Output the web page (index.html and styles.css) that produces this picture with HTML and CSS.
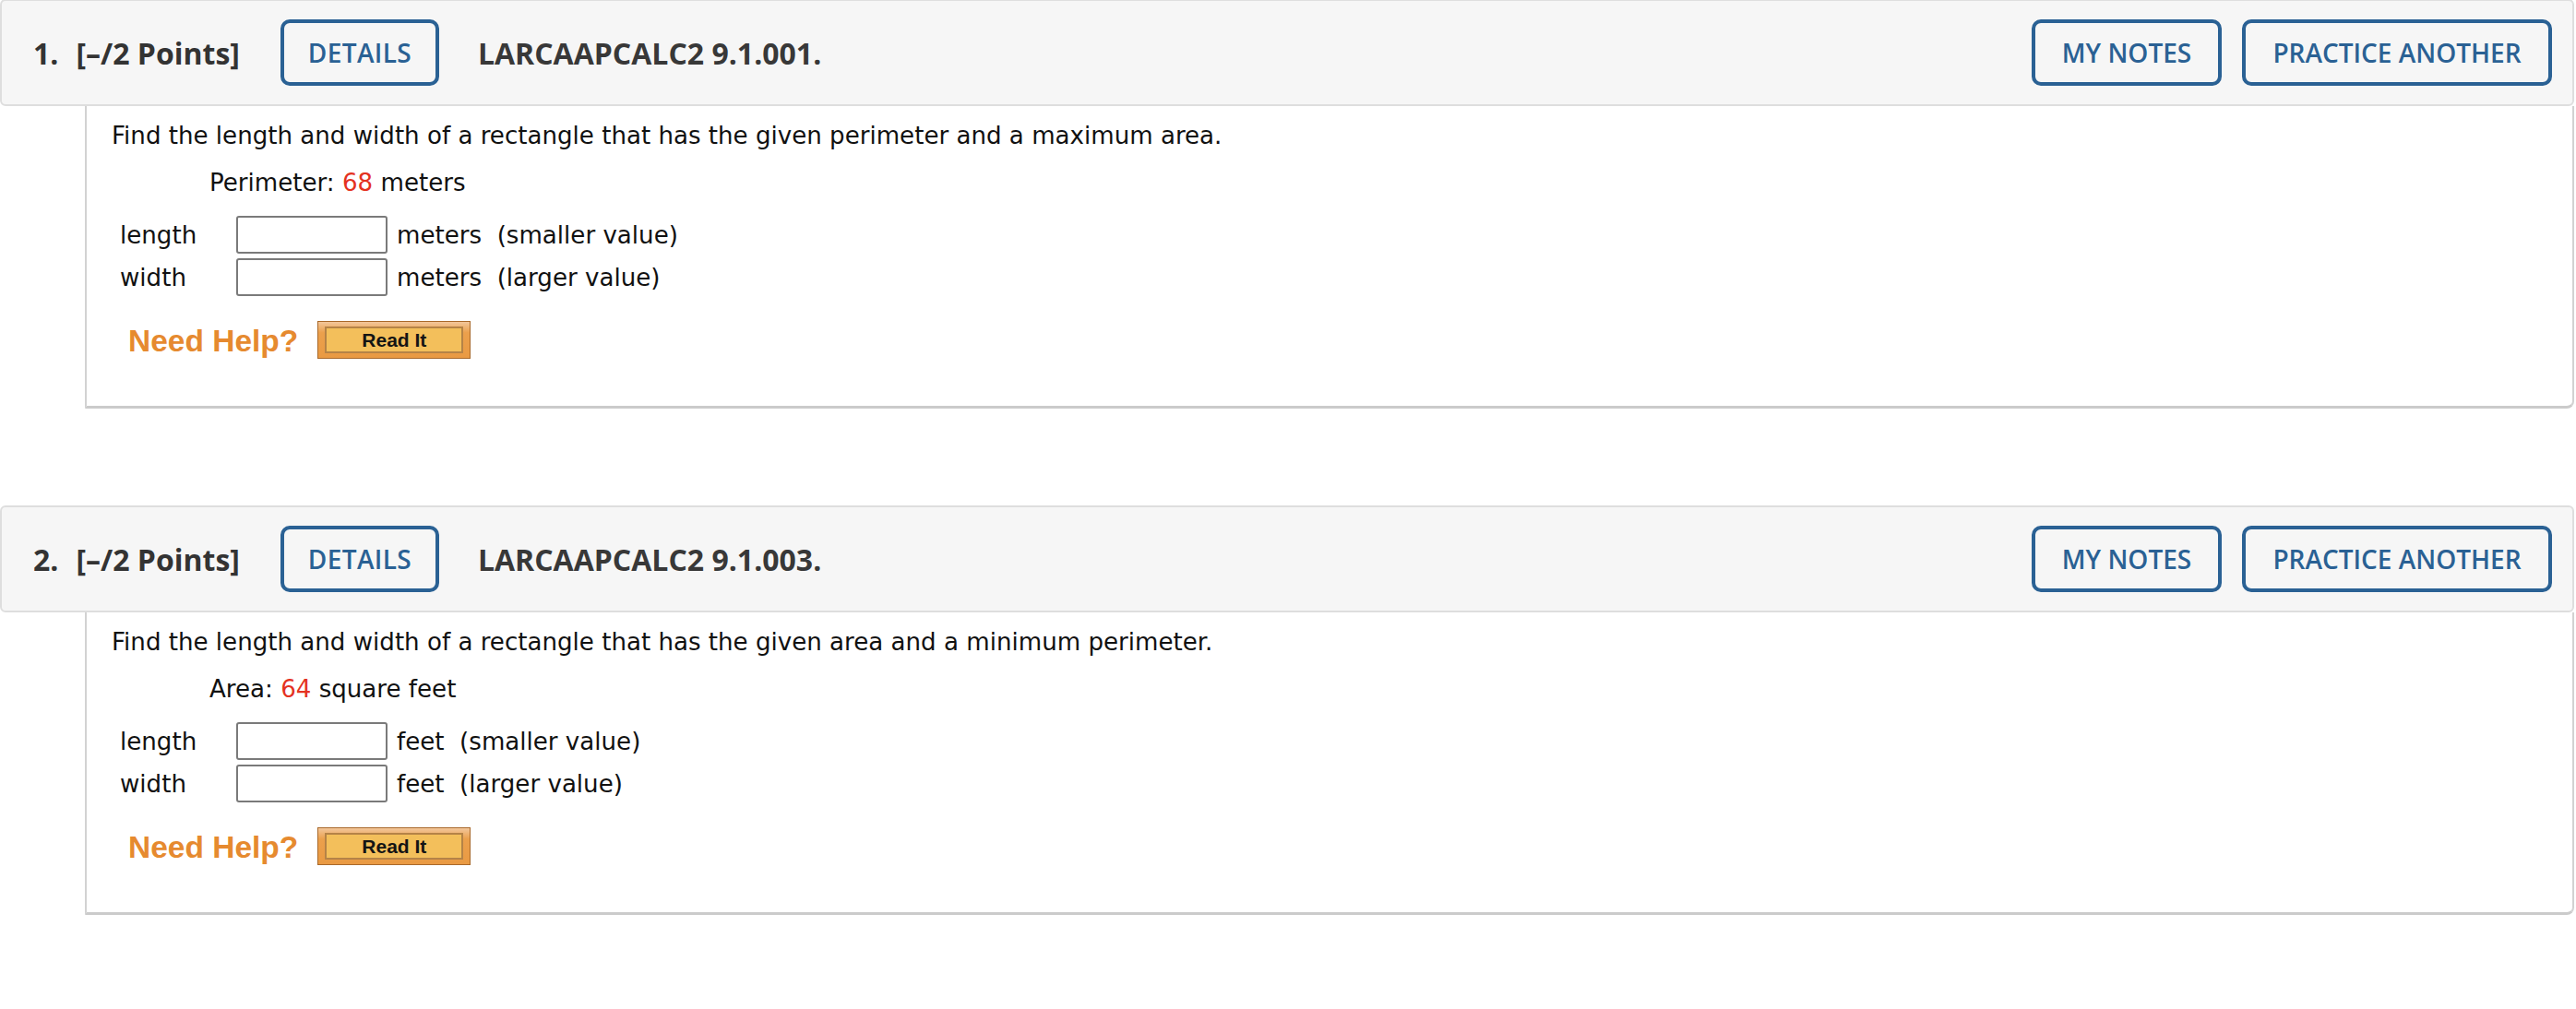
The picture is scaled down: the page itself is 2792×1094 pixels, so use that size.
FILE: index.html
```html
<!DOCTYPE html>
<html lang="en">
<head>
<meta charset="utf-8">
<title>Questions</title>
<link rel="stylesheet" href="styles.css">
</head>
<body>
<div class="question first">
  <div class="q-header">
    <span class="q-num">1.</span>
    <span class="q-points">[–/2 Points]</span>
    <button class="btn-outline details">DETAILS</button>
    <span class="q-code">LARCAAPCALC2 9.1.001.</span>
    <div class="q-actions">
      <button class="btn-outline notes">MY NOTES</button>
      <button class="btn-outline practice">PRACTICE ANOTHER</button>
    </div>
  </div>
  <div class="q-body">
    <p class="prompt">Find the length and width of a rectangle that has the given perimeter and a maximum area.</p>
    <p class="given">Perimeter: <span class="num">68</span> meters</p>
    <div class="answers">
      <span class="lbl">length</span><input class="ans" type="text"><span class="unit">meters&nbsp; (smaller value)</span>
      <span class="lbl">width</span><input class="ans" type="text"><span class="unit">meters&nbsp; (larger value)</span>
    </div>
    <div class="help">
      <span class="need">Need Help?</span>
      <button class="readit"><span class="readit-inner">Read It</span></button>
    </div>
  </div>
</div>
<div class="question">
  <div class="q-header">
    <span class="q-num">2.</span>
    <span class="q-points">[–/2 Points]</span>
    <button class="btn-outline details">DETAILS</button>
    <span class="q-code">LARCAAPCALC2 9.1.003.</span>
    <div class="q-actions">
      <button class="btn-outline notes">MY NOTES</button>
      <button class="btn-outline practice">PRACTICE ANOTHER</button>
    </div>
  </div>
  <div class="q-body">
    <p class="prompt">Find the length and width of a rectangle that has the given area and a minimum perimeter.</p>
    <p class="given">Area: <span class="num">64</span> square feet</p>
    <div class="answers">
      <span class="lbl">length</span><input class="ans" type="text"><span class="unit">feet&nbsp; (smaller value)</span>
      <span class="lbl">width</span><input class="ans" type="text"><span class="unit">feet&nbsp; (larger value)</span>
    </div>
    <div class="help">
      <span class="need">Need Help?</span>
      <button class="readit"><span class="readit-inner">Read It</span></button>
    </div>
  </div>
</div>
</body>
</html>
```
FILE: styles.css
```css
html, body {
  margin: 0;
  padding: 0;
  background: #ffffff;
}

body {
  width: 2790px;
  font-family: "DejaVu Sans", Verdana, sans-serif;
  color: #111;
}

.question {
  margin-bottom: 105px;
}

.question.first {
  margin-top: -1px;
}

.q-header {
  box-sizing: border-box;
  height: 116px;
  display: flex;
  align-items: center;
  padding: 0 22px 0 34px;
  background: #f6f6f6;
  border: 2px solid #dedede;
  border-radius: 6px;
  font-family: "Open Sans", sans-serif;
  color: #333;
}

.q-num {
  font-size: 32px;
  font-weight: 700;
}

.q-points {
  font-size: 32px;
  font-weight: 700;
  margin-left: 19px;
}

.q-code {
  font-size: 32px;
  font-weight: 700;
  color: #383838;
  margin-left: 42px;
}

.btn-outline {
  box-sizing: border-box;
  height: 72px;
  padding: 0;
  background: transparent;
  border: 4px solid #2a6194;
  border-radius: 10px;
  font-family: "Open Sans", sans-serif;
  font-size: 28px;
  font-weight: 600;
  color: #2a6194;
  text-align: center;
}

.details {
  width: 172px;
  margin-left: 44px;
  letter-spacing: 0.4px;
}

.notes {
  width: 206px;
}

.practice {
  width: 336px;
}

.q-actions {
  margin-left: auto;
  display: flex;
  gap: 22px;
}

.q-body {
  margin-left: 92px;
  padding: 16px 0 51px 27px;
  border-left: 2px solid #d2d2d2;
  border-right: 2px solid #d2d2d2;
  border-bottom: 3px solid #cbcbcb;
  border-bottom-right-radius: 8px;
  font-size: 26.1px;
  line-height: 32px;
}

.prompt {
  margin: 0 0 19px 0;
}

.given {
  margin: 0 0 20px 106px;
}

.num {
  color: #e4321f;
}

.answers {
  display: grid;
  grid-template-columns: 126px 164px auto;
  grid-auto-rows: 41px;
  row-gap: 5px;
  align-items: center;
  margin-left: 9px;
  justify-content: start;
}

.lbl {
  line-height: 32px;
}

.ans {
  box-sizing: border-box;
  width: 164px;
  height: 41px;
  margin: 0;
  padding: 0 6px;
  border: 2px solid #7a7a7a;
  border-radius: 3px;
  background: #fff;
  font: inherit;
}

.unit {
  padding-left: 10px;
}

.help {
  margin-top: 27px;
  display: flex;
  align-items: center;
  height: 41px;
  margin-left: 18px;
}

.need {
  font-family: "Liberation Sans", Arial, sans-serif;
  font-weight: 700;
  font-size: 33.5px;
  color: #e68a2f;
  margin-right: 21px;
  position: relative;
  top: 1px;
}

.readit {
  box-sizing: border-box;
  width: 166px;
  height: 41px;
  padding: 5px 7px;
  margin: 0;
  border: 1px solid #a9692a;
  background: linear-gradient(#f2c69a 0%, #eba04c 30%, #e99a43 100%);
  display: flex;
  cursor: pointer;
}

.readit-inner {
  flex: 1;
  display: flex;
  align-items: center;
  justify-content: center;
  border: 2px solid #b58347;
  background: #f3bf5b;
  font-family: "Liberation Sans", Arial, sans-serif;
  font-weight: 700;
  font-size: 21px;
  color: #141414;
}
```
